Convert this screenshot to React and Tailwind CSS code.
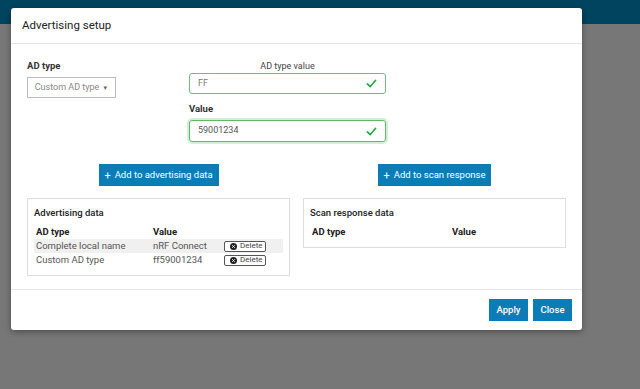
import { useState } from 'react'

const Check = () => (
  <svg className="w-[11px] h-[11px] text-[#28a745]" viewBox="0 0 12 12" fill="none">
    <path d="M1.5 6.5 4.5 9.5 10.5 2.5" stroke="currentColor" strokeWidth="1.8" strokeLinecap="round" strokeLinejoin="round" />
  </svg>
)

const DeleteButton = () => (
  <button className="flex items-center gap-[3px] h-[11px] w-[42px] pl-[5px] border border-[#555] rounded-[2px] bg-white text-[8px] leading-none text-[#444]">
    <svg className="w-[7px] h-[7px]" viewBox="0 0 10 10">
      <circle cx="5" cy="5" r="5" fill="#222" />
      <path d="M3.2 3.2 6.8 6.8M6.8 3.2 3.2 6.8" stroke="#fff" strokeWidth="1.4" />
    </svg>
    Delete
  </button>
)

const Plus = () => <span className="text-[11px] leading-none mr-[4px]">+</span>

const App = () => {
  const [adValue, setAdValue] = useState('FF')
  const [value, setValue] = useState('59001234')

  const rows = [
    { type: 'Complete local name', value: 'nRF Connect' },
    { type: 'Custom AD type', value: 'ff59001234' }
  ]

  return (
    <div className="relative w-[640px] h-[389px] overflow-hidden bg-[#777777] font-['Roboto',sans-serif]">
      <div className="h-[24px] bg-[#00445f]" />

      <div className="absolute left-[11px] top-[8px] w-[571px] h-[322px] bg-white rounded-[3px] shadow-[0_2px_6px_rgba(0,0,0,0.35)] flex flex-col">
        <div className="h-[36px] flex items-center pl-[11px] border-b border-[#e5e5e5]">
          <h2 className="text-[11.5px] text-[#222]">Advertising setup</h2>
        </div>

        <div className="flex-1 px-[16px] pt-[15px]">
          <div className="flex">
            <div className="w-[162px]">
              <div className="h-[14px] text-[9.5px] font-bold text-[#333] leading-[14px]">AD type</div>
              <button className="mt-[4px] h-[21px] w-[89px] border border-[#bbb] text-[9px] text-[#888] flex items-center justify-center gap-[3px]">
                Custom AD type
                <span className="text-[6px] text-[#666]">▼</span>
              </button>
            </div>
            <div className="w-[197px]">
              <div className="h-[14px] text-[9px] text-[#444] leading-[14px] text-center">AD type value</div>
              <div className="h-[21px] border border-[#6cbf7a] rounded-[3px] flex items-center pl-[8px] pr-[8px]">
                <input
                  value={adValue}
                  onChange={(e) => setAdValue(e.target.value)}
                  className="flex-1 min-w-0 text-[9px] text-[#777] outline-none bg-transparent"
                />
                <Check />
              </div>
              <div className="mt-[8px] h-[14px] text-[9.5px] font-bold text-[#333] leading-[14px]">Value</div>
              <div className="mt-[4px] h-[22px] border border-[#5cb86a] rounded-[3px] shadow-[0_0_0_2px_rgba(92,184,106,0.25)] flex items-center pl-[8px] pr-[8px]">
                <input
                  value={value}
                  onChange={(e) => setValue(e.target.value)}
                  className="flex-1 min-w-0 text-[9px] text-[#555] outline-none bg-transparent"
                />
                <Check />
              </div>
            </div>
          </div>

          <div className="grid grid-cols-2 gap-[13px] mt-[22px] items-start">
            <div className="flex flex-col items-center">
              <button className="h-[22px] w-[120px] justify-center bg-[#0a7db7] text-white text-[9.5px] flex items-center">
                <Plus />Add to advertising data
              </button>
              <div className="self-stretch mt-[12px] border border-[#dddddd] px-[6px] pt-[7px] pb-[8px]">
                <div className="text-[9.5px] font-medium text-[#222] leading-[14px]">Advertising data</div>
                <div className="mt-[5px] flex text-[9.5px] font-bold text-[#222] h-[14px] leading-[14px] px-[2px]">
                  <div className="w-[117px]">AD type</div>
                  <div>Value</div>
                </div>
                {rows.map((r, i) => (
                  <div key={r.type} className={`flex items-center h-[14px] text-[9.5px] text-[#555] px-[2px] ${i === 0 ? 'bg-[#f0f0f0]' : ''}`}>
                    <div className="w-[117px]">{r.type}</div>
                    <div className="w-[71px]">{r.value}</div>
                    <DeleteButton />
                  </div>
                ))}
              </div>
            </div>

            <div className="flex flex-col items-center">
              <button className="h-[22px] w-[113px] justify-center bg-[#0a7db7] text-white text-[9.5px] flex items-center">
                <Plus />Add to scan response
              </button>
              <div className="self-stretch mt-[12px] border border-[#dddddd] px-[6px] pt-[7px] pb-[8px]">
                <div className="text-[9.5px] font-medium text-[#222] leading-[14px]">Scan response data</div>
                <div className="mt-[5px] flex text-[9.5px] font-bold text-[#222] h-[14px] leading-[14px] px-[2px]">
                  <div className="w-[140px]">AD type</div>
                  <div>Value</div>
                </div>
              </div>
            </div>
          </div>
        </div>

        <div className="h-[41px] border-t border-[#e5e5e5] flex items-center justify-end gap-[5px] pr-[10px]">
          <button className="h-[22px] w-[39px] bg-[#0a7db7] text-white text-[9.5px] font-medium">Apply</button>
          <button className="h-[22px] w-[39px] bg-[#0a7db7] text-white text-[9.5px] font-medium">Close</button>
        </div>
      </div>
    </div>
  )
}

export default App
